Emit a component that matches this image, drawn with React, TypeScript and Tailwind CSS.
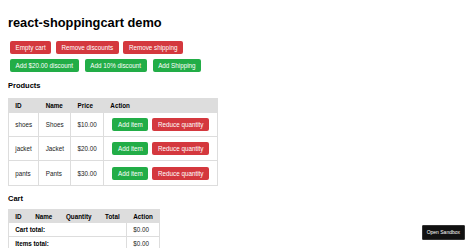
import React from "react";

const products = [
  { id: "shoes", name: "Shoes", price: "$10.00" },
  { id: "jacket", name: "Jacket", price: "$20.00" },
  { id: "pants", name: "Pants", price: "$30.00" },
];

function Btn({ color, children }: { color: "red" | "green"; children: React.ReactNode }) {
  const cls =
    color === "red"
      ? "bg-[#d4383e] text-white"
      : "bg-[#22ad47] text-white";
  return (
    <button
      className={`${cls} rounded-[2px] px-[5.6px] h-[13px] text-[6.3px] leading-[13px] whitespace-nowrap`}
    >
      {children}
    </button>
  );
}

const th = "text-left font-bold text-black px-[6.3px] py-[2.8px] border border-[#dddddd]";
const td = "px-[6.3px] py-[2.8px] border border-[#dddddd]";

export default function App() {
  return (
    <div
      className="relative w-[474px] h-[248px] overflow-hidden bg-white pl-[8px] pt-[15px] text-black"
      style={{ fontFamily: '"Liberation Sans", Arial, sans-serif' }}
    >
      <h1 className="text-[12.8px] leading-[15px] font-bold">react-shoppingcart demo</h1>

      <div className="mt-[11px] ml-[2px] flex flex-col gap-[5px]">
        <div className="flex gap-[4.5px]">
          <Btn color="red">Empty cart</Btn>
          <Btn color="red">Remove discounts</Btn>
          <Btn color="red">Remove shipping</Btn>
        </div>
        <div className="flex gap-[6px]">
          <Btn color="green">Add $20.00 discount</Btn>
          <Btn color="green">Add 10% discount</Btn>
          <Btn color="green">Add Shipping</Btn>
        </div>
      </div>

      <h3 className="mt-[9px] text-[7.5px] leading-[9px] font-bold">Products</h3>

      <table className="mt-[8px] border border-[#dddddd] text-[6.3px] leading-[7px] text-[#222]">
        <thead>
          <tr className="bg-[#dddddd]">
            <th className={th}>ID</th>
            <th className={th}>Name</th>
            <th className={th}>Price</th>
            <th className={th}>Action</th>
          </tr>
        </thead>
        <tbody>
          {products.map((p) => (
            <tr key={p.id}>
              <td className={td}>{p.id}</td>
              <td className={td}>{p.name}</td>
              <td className={td}>{p.price}</td>
              <td className={td}>
                <div className="flex gap-[4px] mx-[2px] my-[2.4px]">
                  <Btn color="green">Add item</Btn>
                  <Btn color="red">Reduce quantity</Btn>
                </div>
              </td>
            </tr>
          ))}
        </tbody>
      </table>

      <h3 className="mt-[8px] text-[7.5px] leading-[9px] font-bold">Cart</h3>

      <table className="mt-[6px] border border-[#dddddd] text-[6.3px] leading-[7px] text-[#222]">
        <thead>
          <tr className="bg-[#dddddd]">
            <th className={th}>ID</th>
            <th className={th}>Name</th>
            <th className={th}>Quantity</th>
            <th className={th}>Total</th>
            <th className={th}>Action</th>
          </tr>
        </thead>
        <tbody>
          <tr>
            <td colSpan={4} className={`${td} font-bold text-black`}>Cart total:</td>
            <td className={td}>$0.00</td>
          </tr>
          <tr>
            <td colSpan={4} className={`${td} font-bold text-black`}>Items total:</td>
            <td className={td}>$0.00</td>
          </tr>
        </tbody>
      </table>

      <div className="absolute right-[9px] bottom-[8px] bg-[#111111] text-white text-[5px] leading-[5px] px-[4px] py-[4px] rounded-[1px] border border-[#333]">
        Open Sandbox
      </div>
    </div>
  );
}
